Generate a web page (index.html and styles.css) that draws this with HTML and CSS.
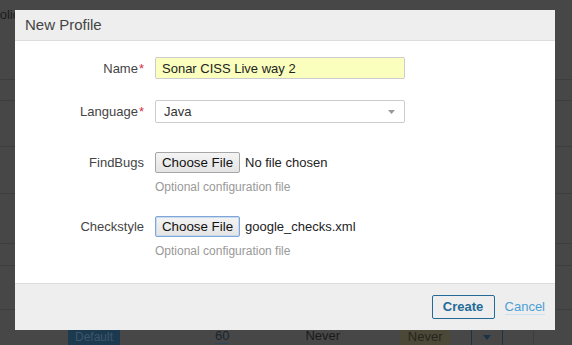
FILE: index.html
```html
<!DOCTYPE html>
<html lang="en">
<head>
<meta charset="utf-8">
<title>New Profile</title>
<link rel="stylesheet" href="styles.css">
</head>
<body>
<div class="page">
  <div class="page-head">
    <div class="head-line">Filter</div>
    <div class="head-line2">Policy</div>
  </div>
  <div class="bg-row h21"></div>
  <div class="bg-row h46"></div>
  <div class="bg-row h47"></div>
  <div class="bg-row h50"></div>
  <div class="bg-row h22"></div>
  <div class="bg-row h44"></div>
  <div class="bg-last">
    <span class="bg-default">Default</span>
    <span class="bg-count">60</span>
    <span class="bg-never">Never</span>
    <span class="bg-never-badge">Never</span>
    <span class="bg-dd"><svg width="8" height="5" viewBox="0 0 8 5"><path d="M0 0h8L4 5z" fill="#1a3347"/></svg></span>
    <span class="bg-sep"></span>
  </div>
</div>

<div class="modal">
  <div class="modal-head">New Profile</div>
  <div class="modal-body">
    <div class="field f-name">
      <label class="field-label">Name<em>*</em></label>
      <input class="text-input" type="text" value="Sonar CISS Live way 2">
    </div>
    <div class="field f-lang">
      <label class="field-label">Language<em>*</em></label>
      <div class="select">
        <span class="select-value">Java</span>
        <svg class="select-arrow" width="7" height="4" viewBox="0 0 7 4"><path d="M0 0h7L3.5 4z" fill="#999"/></svg>
      </div>
    </div>
    <div class="field f-file f-first">
      <label class="field-label">FindBugs</label>
      <div class="file-picker">
        <span class="file-btn">Choose File</span>
        <span class="file-name">No file chosen</span>
      </div>
      <div class="hint">Optional configuration file</div>
    </div>
    <div class="field f-file">
      <label class="field-label">Checkstyle</label>
      <div class="file-picker">
        <span class="file-btn focused">Choose File</span>
        <span class="file-name">google_checks.xml</span>
      </div>
      <div class="hint">Optional configuration file</div>
    </div>
  </div>
  <div class="modal-foot">
    <span class="btn-create">Create</span>
    <span class="link-cancel">Cancel</span>
  </div>
</div>
</body>
</html>
```

FILE: styles.css
```css
* { box-sizing: border-box; }
html, body {
  margin: 0;
  padding: 0;
}
body {
  width: 572px;
  height: 345px;
  overflow: hidden;
  background: #474747;
  font-family: "Liberation Sans", Arial, sans-serif;
  font-size: 13px;
  color: #333;
  position: relative;
}

/* background page (already dimmed by overlay) */
.page { width: 572px; }
.page-head {
  display: flow-root;
  height: 80px;
  border-bottom: 1px solid #3e3e3e;
  color: #1c1c1c;
  font-size: 13px;
  overflow: hidden;
}
.head-line { margin-top: -12px; margin-left: -12px; line-height: 16px; }
.head-line2 { margin-left: -9px; margin-top: 3px; line-height: 16px; }
.bg-row { border-bottom: 1px solid #3e3e3e; }
.h21 { height: 21px; }
.h46 { height: 46px; }
.h47 { height: 47px; }
.h50 { height: 50px; }
.h22 { height: 22px; }
.h44 { height: 44px; }
.bg-last {
  height: 36px;
  display: flex;
  align-items: flex-end;
  padding-left: 68px;
  font-size: 13px;
}
.bg-default {
  width: 52px;
  height: 20px;
  background: #1b3a50;
  color: #3d566a;
  font-size: 12px;
  line-height: 20px;
  text-align: center;
  margin-bottom: -1px;
}
.bg-count {
  margin-left: 95px;
  color: #1a2530;
  border-bottom: 1px solid #2e4658;
  line-height: 14px;
  margin-bottom: 2px;
}
.bg-never {
  margin-left: 76px;
  color: #1a1a1a;
  line-height: 16px;
  margin-bottom: 2px;
}
.bg-never-badge {
  margin-left: 60px;
  width: 50px;
  height: 20px;
  background: #4b4837;
  color: #26251c;
  line-height: 20px;
  text-align: center;
  margin-bottom: -1px;
}
.bg-dd {
  margin-left: 21px;
  width: 32px;
  height: 20px;
  border-left: 1px solid #1a3347;
  border-right: 1px solid #1a3347;
  display: flex;
  align-items: center;
  justify-content: center;
  margin-bottom: -1px;
}
.bg-sep {
  margin-left: 30px;
  width: 1px;
  height: 36px;
  background: #3e3e3e;
}

/* modal */
.modal {
  position: absolute;
  top: 10px;
  left: 15px;
  width: 540px;
  background: #fff;
}
.modal-head {
  height: 31px;
  background: #eee;
  border-bottom: 1px solid #ddd;
  padding-left: 10px;
  font-size: 15px;
  line-height: 30px;
  color: #444;
}
.modal-body {
  padding: 16px 0 24px;
}
.field {
  display: grid;
  grid-template-columns: 129px 250px;
  column-gap: 11px;
  align-items: center;
}
.field-label {
  text-align: right;
  color: #444;
  font-size: 13px;
}
.field-label em {
  font-style: normal;
  color: #d4333f;
  margin-left: 1px;
}
.f-name { margin-bottom: 21px; }
.f-lang { margin-bottom: 29px; }
.f-first { margin-bottom: 21px; }

.text-input {
  height: 22px;
  width: 250px;
  margin: 0;
  padding: 0 6px;
  border: 1px solid #ccc;
  border-radius: 2px;
  background: #faffbd;
  font-family: inherit;
  font-size: 13px;
  color: #222;
  outline: none;
}
.select {
  height: 23px;
  border: 1px solid #ccc;
  border-radius: 2px;
  background: #fff;
  display: flex;
  align-items: center;
  justify-content: space-between;
  padding: 0 9px 0 8px;
  font-size: 13px;
  color: #333;
}
.select-arrow { display: block; }

.file-picker {
  display: flex;
  align-items: center;
  height: 21px;
}
.file-btn {
  height: 21px;
  width: 85px;
  border: 1px solid #a6a6a6;
  border-radius: 2px;
  background: linear-gradient(#f4f4f4, #e4e4e4);
  font-size: 13.33px;
  line-height: 19px;
  text-align: center;
  color: #111;
}
.file-btn.focused {
  border-color: #7ea6d6;
  box-shadow: 0 0 0 1px #c8daf0 inset;
}
.file-name {
  margin-left: 5px;
  font-size: 13px;
  color: #222;
}
.hint {
  grid-column: 2;
  margin-top: 6px;
  line-height: 16px;
  font-size: 12px;
  color: #999;
}

.modal-foot {
  height: 47px;
  background: #eee;
  border-top: 1px solid #ddd;
  display: flex;
  align-items: center;
  justify-content: flex-end;
  gap: 10px;
  padding: 0 10px 1px 0;
}
.btn-create {
  height: 24px;
  width: 63px;
  border: 1px solid #236a97;
  border-radius: 2px;
  color: #236a97;
  font-weight: bold;
  font-size: 13px;
  line-height: 22px;
  text-align: center;
}
.link-cancel {
  color: #4b9fd5;
  font-size: 13px;
  line-height: 15px;
  border-bottom: 1px solid #cae3f2;
}
```
